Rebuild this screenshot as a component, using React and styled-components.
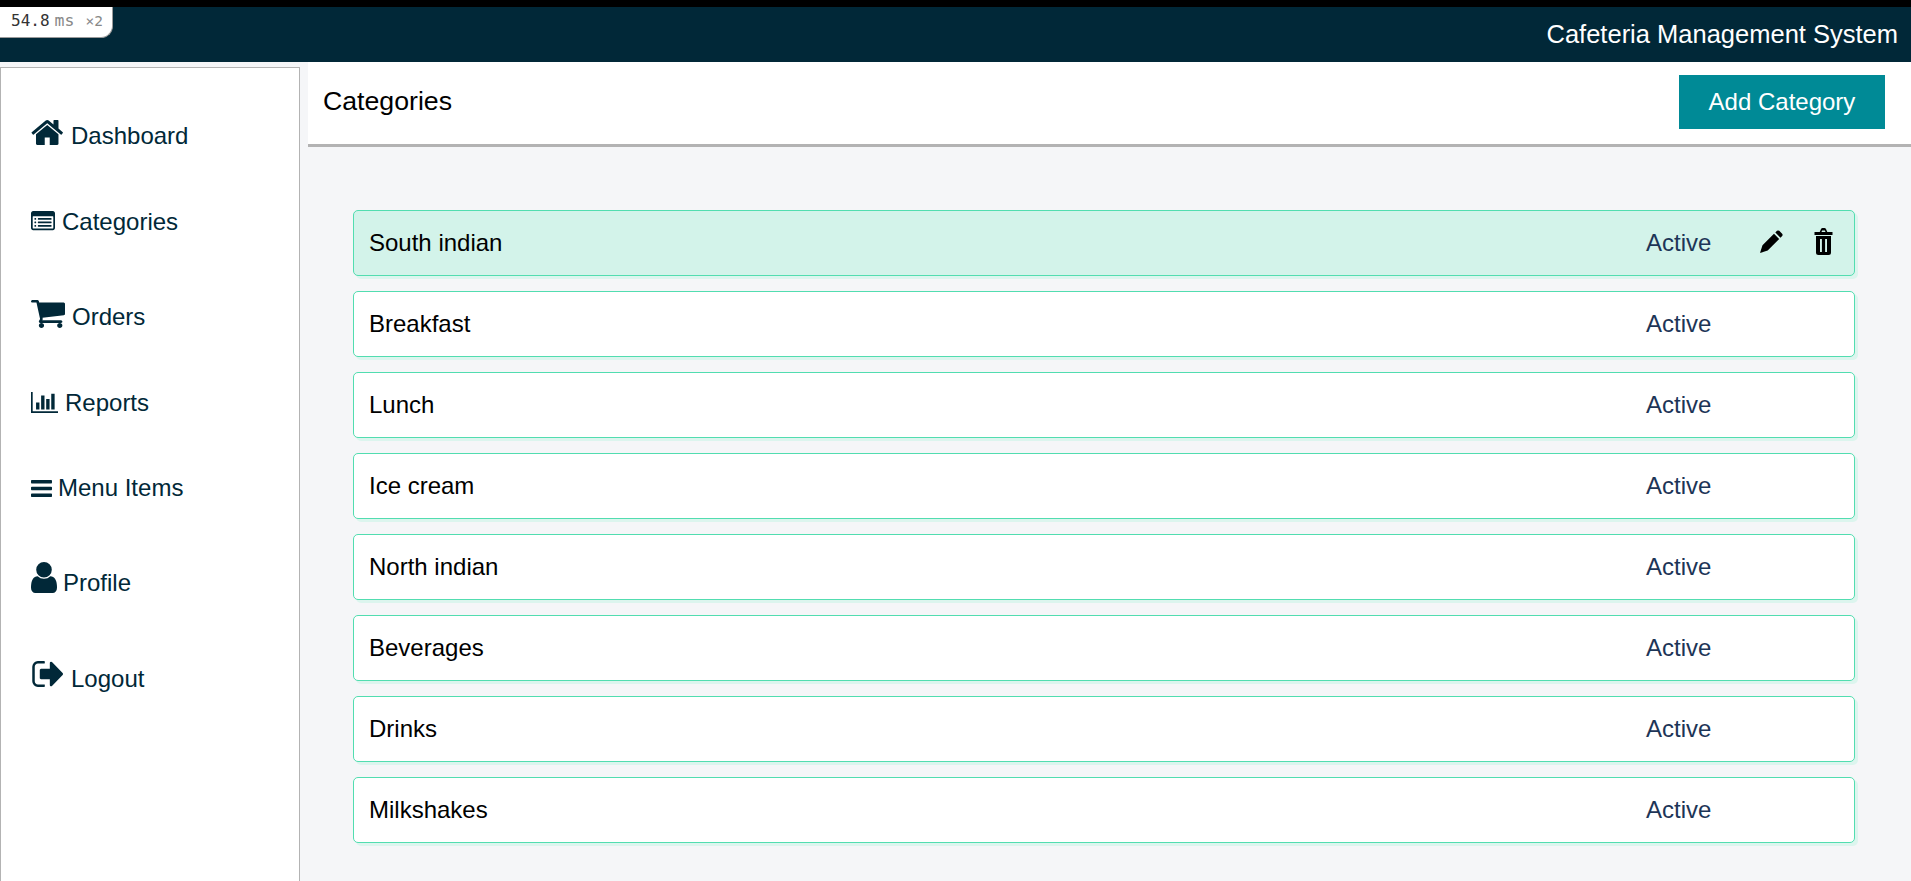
import React from "react";
import styled, { createGlobalStyle } from "styled-components";

const GlobalStyle = createGlobalStyle`
    html, body {
        margin: 0;
        padding: 0;
        background-color: #f5f6f8;
        font-family: "Liberation Sans", Arial, sans-serif;
    }
`;

const Page = styled.div`
    height: 881px;
    overflow: hidden;
    display: flex;
    flex-direction: column;
`;

const TopBar = styled.header`
    height: 55px;
    flex: none;
    border-top: 7px solid #000;
    background-color: #012838;
    color: #fff;
    display: flex;
    align-items: center;
    justify-content: flex-end;
    padding-right: 13px;
    font-size: 25.5px;
`;

const PerfBadge = styled.div`
    position: absolute;
    top: 7px;
    left: 0;
    width: 113px;
    height: 31px;
    box-sizing: border-box;
    padding-left: 11px;
    background-color: #fff;
    border-right: 1px solid #9a9a9a;
    border-bottom: 1px solid #9a9a9a;
    border-bottom-right-radius: 12px;
    font-family: "DejaVu Sans Mono", monospace;
    font-size: 16px;
    line-height: 28px;
    color: #333;
    white-space: nowrap;
`;

const PerfUnit = styled.span`
    margin-left: ${props => props.$gap}px;
    font-size: ${props => props.$size}px;
    color: #888;
`;

const Body = styled.div`
    flex: 1;
    display: flex;
    min-height: 0;
`;

const Sidebar = styled.nav`
    width: 300px;
    flex: none;
    box-sizing: border-box;
    margin-top: 5px;
    padding: 48px 0 0 30px;
    background-color: #fff;
    border: 1px solid #b3b3b3;
    border-bottom: none;
`;

const NavItem = styled.a`
    display: block;
    height: ${props => props.$height}px;
    line-height: 40px;
    font-size: 24px;
    color: #012838;
    white-space: nowrap;
`;

const NavIcon = styled.svg`
    width: ${props => props.$w}px;
    height: ${props => props.$h}px;
    margin-right: ${props => props.$gap}px;
    vertical-align: ${props => props.$drop}px;
    fill: #012838;
`;

const Main = styled.main`
    flex: 1;
    margin-left: 8px;
    min-width: 0;
`;

const PageHeader = styled.div`
    height: 85px;
    box-sizing: border-box;
    display: flex;
    align-items: center;
    justify-content: space-between;
    padding: 0 26px 3px 15px;
    background-color: #fff;
    border-bottom: 3px solid #b3b3b3;
`;

const PageTitle = styled.h1`
    margin: 0;
    font-size: 26.7px;
    font-weight: 400;
    color: #000;
`;

const AddButton = styled.button`
    width: 206px;
    height: 54px;
    border: none;
    background-color: #008a96;
    color: #fff;
    font-family: inherit;
    font-size: 24px;
    cursor: pointer;
`;

const CategoryList = styled.div`
    display: flex;
    flex-direction: column;
    gap: 15px;
    padding: 63px 56px 0 45px;
`;

const CategoryRow = styled.div`
    height: 66px;
    box-sizing: border-box;
    display: flex;
    align-items: center;
    padding-left: 15px;
    background-color: ${props => (props.$selected ? "#d3f3ea" : "#fff")};
    border: 1px solid #52ddb0;
    border-radius: 5px;
    box-shadow: 3px 3px 0 #dcf5ee;
    font-size: 24px;
`;

const CategoryName = styled.div`
    flex: 1;
    color: #000;
`;

const CategoryStatus = styled.div`
    width: 114px;
    color: #1d3557;
`;

const RowActions = styled.div`
    width: 94px;
    height: 30px;
    margin-bottom: 3px;
    display: flex;
    align-items: center;
    gap: 31px;
`;

const ActionIcon = styled.svg`
    width: ${props => props.$w}px;
    height: ${props => props.$h}px;
    fill: #000;
`;

const navItems = [
    {
        label: "Dashboard",
        height: 86,
        w: 32,
        h: 27,
        gap: 8,
        drop: -1,
        box: "64 150 1640 1390",
        d: "M1472 992v480q0 26-19 45t-45 19h-384v-384h-256v384h-384q-26 0-45-19t-19-45v-480q0-1 .5-3t.5-3l575-474 575 474q1 2 1 6zm223-69l-62 74q-8 9-21 11h-3q-13 0-21-7l-692-577-692 577q-12 8-24 7-13-2-21-11l-62-74q-8-10-7-23.5t11-21.5l719-599q32-26 76-26t76 26l244 204v-195q0-14 9-23t23-9h192q14 0 23 9t9 23v408l219 182q10 8 11 21.5t-7 23.5z",
    },
    {
        label: "Categories",
        height: 95,
        w: 24,
        h: 21,
        gap: 7,
        drop: -2,
        box: "0 128 1792 1536",
        d: "M384 1184v64q0 13-9.5 22.5t-22.5 9.5h-64q-13 0-22.5-9.5t-9.5-22.5v-64q0-13 9.5-22.5t22.5-9.5h64q13 0 22.5 9.5t9.5 22.5zm0-256v64q0 13-9.5 22.5t-22.5 9.5h-64q-13 0-22.5-9.5t-9.5-22.5v-64q0-13 9.5-22.5t22.5-9.5h64q13 0 22.5 9.5t9.5 22.5zm0-256v64q0 13-9.5 22.5t-22.5 9.5h-64q-13 0-22.5-9.5t-9.5-22.5v-64q0-13 9.5-22.5t22.5-9.5h64q13 0 22.5 9.5t9.5 22.5zm1152 512v64q0 13-9.5 22.5t-22.5 9.5h-960q-13 0-22.5-9.5t-9.5-22.5v-64q0-13 9.5-22.5t22.5-9.5h960q13 0 22.5 9.5t9.5 22.5zm0-256v64q0 13-9.5 22.5t-22.5 9.5h-960q-13 0-22.5-9.5t-9.5-22.5v-64q0-13 9.5-22.5t22.5-9.5h960q13 0 22.5 9.5t9.5 22.5zm0-256v64q0 13-9.5 22.5t-22.5 9.5h-960q-13 0-22.5-9.5t-9.5-22.5v-64q0-13 9.5-22.5t22.5-9.5h960q13 0 22.5 9.5t9.5 22.5zm128 704v-832q0-13-9.5-22.5t-22.5-9.5h-1472q-13 0-22.5 9.5t-9.5 22.5v832q0 13 9.5 22.5t22.5 9.5h1472q13 0 22.5-9.5t9.5-22.5zm128-1088v1088q0 66-47 113t-113 47h-1472q-66 0-113-47t-47-113v-1088q0-66 47-113t113-47h1472q66 0 113 47t47 113z",
    },
    {
        label: "Orders",
        height: 86,
        w: 34,
        h: 28,
        gap: 7,
        drop: -3,
        box: "64 256 1664 1408",
        d: "M704 1536q0 52-38 90t-90 38-90-38-38-90 38-90 90-38 90 38 38 90zm896 0q0 52-38 90t-90 38-90-38-38-90 38-90 90-38 90 38 38 90zm128-1088v512q0 24-16.5 42.5t-40.5 21.5l-1044 122q13 60 13 70 0 16-24 64h920q26 0 45 19t19 45-19 45-45 19h-1024q-26 0-45-19t-19-45q0-11 8-31.5t16-36 21.5-40 15.5-29.5l-177-823h-204q-26 0-45-19t-19-45 19-45 45-19h256q16 0 28.5 6.5t19.5 15.5 13 24.5 8 26 5.5 29.5 4.5 26h1201q26 0 45 19t19 45z",
    },
    {
        label: "Reports",
        height: 85,
        w: 27,
        h: 21,
        gap: 7,
        drop: -2,
        box: "0 128 2048 1536",
        d: "M640 896v512h-256v-512h256zm384-512v1024h-256v-1024h256zm1024 1152v128h-2048v-1536h128v1408h1920zm-640-896v768h-256v-768h256zm384-384v1152h-256v-1152h256z",
    },
    {
        label: "Menu Items",
        height: 94,
        w: 21,
        h: 17,
        gap: 6,
        drop: -1,
        box: "128 256 1536 1280",
        d: "M1664 1344v128q0 26-19 45t-45 19h-1408q-26 0-45-19t-19-45v-128q0-26 19-45t45-19h1408q26 0 45 19t19 45zm0-512v128q0 26-19 45t-45 19h-1408q-26 0-45-19t-19-45v-128q0-26 19-45t45-19h1408q26 0 45 19t19 45zm0-512v128q0 26-19 45t-45 19h-1408q-26 0-45-19t-19-45v-128q0-26 19-45t45-19h1408q26 0 45 19t19 45z",
    },
    {
        label: "Profile",
        height: 97,
        w: 26,
        h: 31,
        gap: 6,
        drop: -2,
        box: "256 128 1280 1536",
        d: "M1536 1399q0 109-62.5 187t-150.5 78h-854q-88 0-150.5-78t-62.5-187q0-85 8.5-160.5t31.5-152 58.5-131 94-89 134.5-34.5q131 128 313 128t313-128q76 0 134.5 34.5t94 89 58.5 131 31.5 152 8.5 160.5zm-256-887q0 159-112.5 271.5t-271.5 112.5-271.5-112.5-112.5-271.5 112.5-271.5 271.5-112.5 271.5 112.5 112.5 271.5z",
    },
    {
        label: "Logout",
        height: 60,
        w: 32,
        h: 26,
        gap: 8,
        drop: 0,
        box: "0 256 1632 1280",
        d: "M704 1440q0 4 1 20t.5 26.5-3 23.5-10 19.5-20.5 6.5h-320q-119 0-203.5-84.5t-84.5-203.5v-704q0-119 84.5-203.5t203.5-84.5h320q13 0 22.5 9.5t9.5 22.5q0 4 1 20t.5 26.5-3 23.5-10 19.5-20.5 6.5h-320q-66 0-113 47t-47 113v704q0 66 47 113t113 47h312l11.5 1 11.5 3 8 5.5 7 9 2 13.5zm928-544q0 26-19 45l-544 544q-19 19-45 19t-45-19-19-45v-288h-448q-26 0-45-19t-19-45v-384q0-26 19-45t45-19h448v-288q0-26 19-45t45-19 45 19l544 544q19 19 19 45z",
    },
];

const categories = [
    "South indian",
    "Breakfast",
    "Lunch",
    "Ice cream",
    "North indian",
    "Beverages",
    "Drinks",
    "Milkshakes",
];

const App = () => {
    return (
        <Page>
            <GlobalStyle />
            <TopBar>Cafeteria Management System</TopBar>
            <PerfBadge>
                54.8
                <PerfUnit $gap={5} $size={16.5}>ms</PerfUnit>
                <PerfUnit $gap={11} $size={14.5}>×2</PerfUnit>
            </PerfBadge>
            <Body>
                <Sidebar>
                    {navItems.map(item => (
                        <NavItem key={item.label} $height={item.height}>
                            <NavIcon
                                viewBox={item.box}
                                preserveAspectRatio="none"
                                $w={item.w}
                                $h={item.h}
                                $gap={item.gap}
                                $drop={item.drop}
                            >
                                <path d={item.d} />
                            </NavIcon>
                            {item.label}
                        </NavItem>
                    ))}
                </Sidebar>
                <Main>
                    <PageHeader>
                        <PageTitle>Categories</PageTitle>
                        <AddButton>Add Category</AddButton>
                    </PageHeader>
                    <CategoryList>
                        {categories.map((name, index) => (
                            <CategoryRow key={name} $selected={index === 0}>
                                <CategoryName>{name}</CategoryName>
                                <CategoryStatus>Active</CategoryStatus>
                                <RowActions>
                                    {index === 0 && (
                                        <>
                                            <ActionIcon viewBox="0 0 24 24" $w={23} $h={23}>
                                                <path d="M0 24l2.6-8L14.6 4l5.4 5.4L8 21.4zM16 2.6l1.7-1.7q1.2-1 2.4 0l3 3q1 1.2 0 2.4L21.4 8z" />
                                            </ActionIcon>
                                            <ActionIcon viewBox="0 0 18 27" $w={19} $h={27}>
                                                <path d="M0 4h5.2L6.4 1.2Q7 0 8 0h2q1 0 1.6 1.2L12.8 4H18v3H0zM7 4h4l-.6-1.5H7.6zM1.5 8h15v16.5q0 2.5-2.5 2.5H4q-2.5 0-2.5-2.5zM5.5 11v13H7.4V11zM10.6 11v13h1.9V11z" fillRule="evenodd" />
                                            </ActionIcon>
                                        </>
                                    )}
                                </RowActions>
                            </CategoryRow>
                        ))}
                    </CategoryList>
                </Main>
            </Body>
        </Page>
    );
};

export default App;
